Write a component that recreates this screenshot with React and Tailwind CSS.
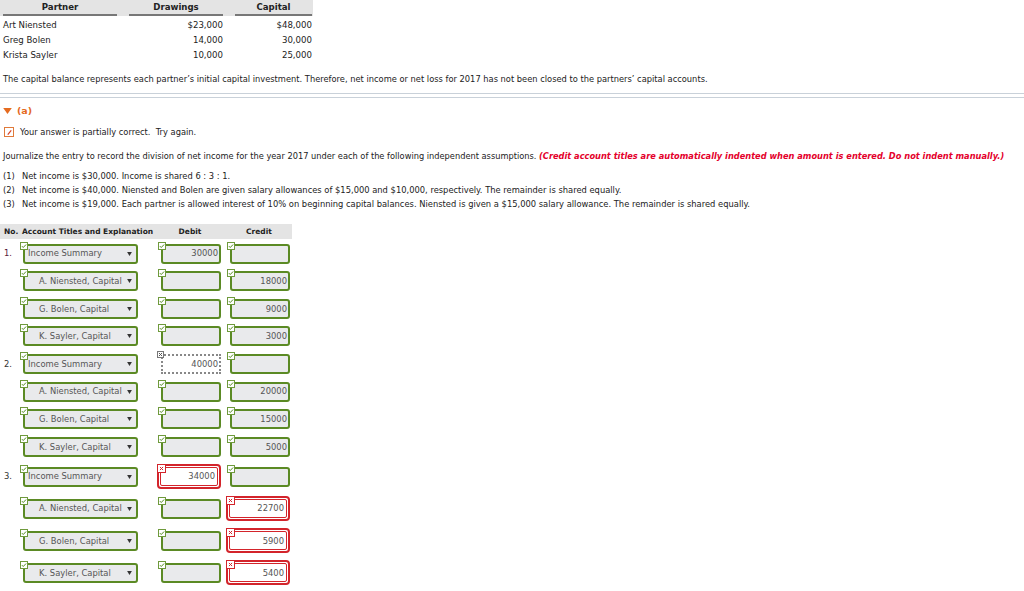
const Check = () => (
  <span className="absolute -left-[5px] -top-[4px] flex h-[8px] w-[8px] items-center justify-center border border-[#6f9a3c] bg-white">
    <svg viewBox="0 0 8 8" className="h-[6px] w-[6px]">
      <path d="M1.2 4.2 L3 6 L6.8 2" fill="none" stroke="#4e8a1a" strokeWidth="1.3" />
    </svg>
  </span>
)

const Cross = ({ red }) => (
  <span
    className={
      red
        ? 'absolute -left-[2px] -top-[2px] z-10 flex h-[9px] w-[9px] items-center justify-center border border-[#d3242b] bg-white'
        : 'absolute -left-[6px] -top-[5px] flex h-[7px] w-[7px] items-center justify-center border border-[#777] bg-white'
    }
  >
    <svg viewBox="0 0 8 8" className="h-[5px] w-[5px]">
      <path d="M1.5 1.5 L6.5 6.5 M6.5 1.5 L1.5 6.5" fill="none" stroke={red ? '#d3242b' : '#555'} strokeWidth="1.6" />
    </svg>
  </span>
)

function Select({ label, indent }) {
  return (
    <div className="relative h-[20px] w-[115px] rounded-[3px] border-2 border-[#5b8a24] bg-[#e9eaec]">
      <Check />
      <div className={'flex h-full items-center whitespace-nowrap text-[8.4px] text-[#555] ' + (indent ? 'pl-[14px]' : 'pl-[3px]')}>{label}</div>
      <svg viewBox="0 0 6 5" className="absolute right-[4px] top-[6px] h-[4px] w-[5px]">
        <path d="M0 0 L6 0 L3 5 Z" fill="#333" />
      </svg>
    </div>
  )
}

function Amount({ v, state }) {
  if (state === 'red') {
    return (
      <div className="relative -my-[2px] -ml-[4px] h-[25px] w-[64px] rounded-[4px] border-2 border-[#d3242b] bg-white p-[1px]">
        <Cross red />
        <div className="flex h-full items-center justify-end rounded-[2px] border border-[#d3242b] pr-[2px] text-[8.4px] text-[#555]">{v}</div>
      </div>
    )
  }
  if (state === 'dot') {
    return (
      <div className="relative h-[20px] w-[60px] border-2 border-dotted border-[#888] bg-white">
        <Cross />
        <div className="flex h-full items-center justify-end pr-[1px] text-[8.4px] text-[#555]">{v}</div>
      </div>
    )
  }
  return (
    <div className="relative h-[20px] w-[60px] rounded-[3px] border-2 border-[#5b8a24] bg-[#e9eaec]">
      <Check />
      <div className="flex h-full items-center justify-end pr-[1px] text-[8.4px] text-[#555]">{v}</div>
    </div>
  )
}

const ROWS = [
  { no: '1.', acct: 'Income Summary', dr: '30000', cr: '' },
  { acct: 'A. Niensted, Capital', ind: true, dr: '', cr: '18000' },
  { acct: 'G. Bolen, Capital', ind: true, dr: '', cr: '9000' },
  { acct: 'K. Sayler, Capital', ind: true, dr: '', cr: '3000' },
  { no: '2.', acct: 'Income Summary', dr: '40000', drs: 'dot', cr: '' },
  { acct: 'A. Niensted, Capital', ind: true, dr: '', cr: '20000' },
  { acct: 'G. Bolen, Capital', ind: true, dr: '', cr: '15000' },
  { acct: 'K. Sayler, Capital', ind: true, dr: '', cr: '5000' },
  { no: '3.', acct: 'Income Summary', dr: '34000', drs: 'red', cr: '', big: true },
  { acct: 'A. Niensted, Capital', ind: true, dr: '', cr: '22700', crs: 'red', big: true },
  { acct: 'G. Bolen, Capital', ind: true, dr: '', cr: '5900', crs: 'red', big: true },
  { acct: 'K. Sayler, Capital', ind: true, dr: '', cr: '5400', crs: 'red', big: true },
]

const PARTNERS = [
  ['Art Niensted', '$23,000', '$48,000'],
  ['Greg Bolen', '14,000', '30,000'],
  ['Krista Sayler', '10,000', '25,000'],
]

const ITEMS = [
  'Net income is $30,000. Income is shared 6 : 3 : 1.',
  'Net income is $40,000. Niensted and Bolen are given salary allowances of $15,000 and $10,000, respectively. The remainder is shared equally.',
  'Net income is $19,000. Each partner is allowed interest of 10% on beginning capital balances. Niensted is given a $15,000 salary allowance. The remainder is shared equally.',
]

export default function App() {
  return (
    <div className="h-[591px] w-[1024px] overflow-hidden bg-white text-[#222]" style={{ fontFamily: '"DejaVu Sans", Verdana, sans-serif' }}>
      {/* partner table */}
      <div className="w-[313px]">
        <div className="flex h-[16px] bg-[#e4e4e4] text-[8.6px] font-bold">
          <div className="ml-[3px] w-[114px] border-b-2 border-[#777] text-center leading-[14px]">Partner</div>
          <div className="ml-[12px] w-[94px] border-b-2 border-[#777] text-center leading-[14px]">Drawings</div>
          <div className="ml-[12px] w-[77px] border-b-2 border-[#777] text-center leading-[14px]">Capital</div>
        </div>
        <div className="pt-[2px] text-[8.6px]">
          {PARTNERS.map((p) => (
            <div key={p[0]} className="flex h-[15px] items-center">
              <div className="w-[117px] pl-[3px]">{p[0]}</div>
              <div className="w-[106px] text-right">{p[1]}</div>
              <div className="w-[89px] text-right">{p[2]}</div>
            </div>
          ))}
        </div>
      </div>

      <p className="mt-[10px] whitespace-nowrap pl-[3px] text-[8.3px] leading-[12px]">
        The capital balance represents each partner’s initial capital investment. Therefore, net income or net loss for 2017 has not been closed to the partners’ capital accounts.
      </p>

      <div className="mt-[8px] h-[5px] border-y border-[#c9d1d9]" />

      <div className="mt-[6px] flex items-center gap-[5px] pl-[3px] text-[9.5px] font-bold text-[#e56b1f]">
        <svg viewBox="0 0 10 7" className="h-[6px] w-[9px]">
          <path d="M0 0 L10 0 L5 7 Z" fill="#e56b1f" />
        </svg>
        <span>(a)</span>
      </div>

      <div className="mt-[8px] flex items-center gap-[6px] pl-[4px] text-[8.3px]">
        <span className="flex h-[10px] w-[10px] items-center justify-center border border-[#e07a3a] bg-white">
          <svg viewBox="0 0 8 8" className="h-[7px] w-[7px]">
            <path d="M2 6.5 L6 1.5" stroke="#d9452a" strokeWidth="1.4" fill="none" />
          </svg>
        </span>
        <span>Your answer is partially correct.&nbsp; Try again.</span>
      </div>

      <p className="mt-[11px] whitespace-nowrap pl-[3px] text-[8.25px] leading-[12px]">
        Journalize the entry to record the division of net income for the year 2017 under each of the following independent assumptions.{' '}
        <span className="font-bold italic text-[#e4002b]">(Credit account titles are automatically indented when amount is entered. Do not indent manually.)</span>
      </p>

      <div className="mt-[7px] flex flex-col text-[8.35px] leading-[14px]">
        {ITEMS.map((t, i) => (
          <div key={i} className="flex whitespace-nowrap">
            <span className="w-[22px] shrink-0 pl-[3px]">({i + 1})</span>
            <span>{t}</span>
          </div>
        ))}
      </div>

      {/* journal */}
      <div className="mt-[13px] w-[292px]">
        <div className="flex h-[15px] items-center whitespace-nowrap bg-[#e4e4e4] text-[7.5px] font-bold">
          <span className="w-[22px] pl-[4px]">No.</span>
          <span className="w-[138px]">Account Titles and Explanation</span>
          <span className="w-[60px] text-center">Debit</span>
          <span className="ml-[9px] w-[60px] text-center">Credit</span>
        </div>
        <div className="mt-[5px] flex flex-col gap-[7.6px]">
          {ROWS.map((r, i) => (
            <div key={i} className={'flex items-center ' + (r.big ? 'h-[24.5px]' : 'h-[20px]')}>
              <span className={'w-[23px] pl-[4px] text-[8.4px] ' + (i === 0 ? 'text-[#5a1a3a]' : 'text-[#333]')}>{r.no}</span>
              <Select label={r.acct} indent={r.ind} />
              <div className="ml-[23px] flex w-[60px] justify-end">
                <Amount v={r.dr} state={r.drs} />
              </div>
              <div className="ml-[9px] flex w-[60px] justify-end">
                <Amount v={r.cr} state={r.crs} />
              </div>
            </div>
          ))}
        </div>
      </div>
    </div>
  )
}
